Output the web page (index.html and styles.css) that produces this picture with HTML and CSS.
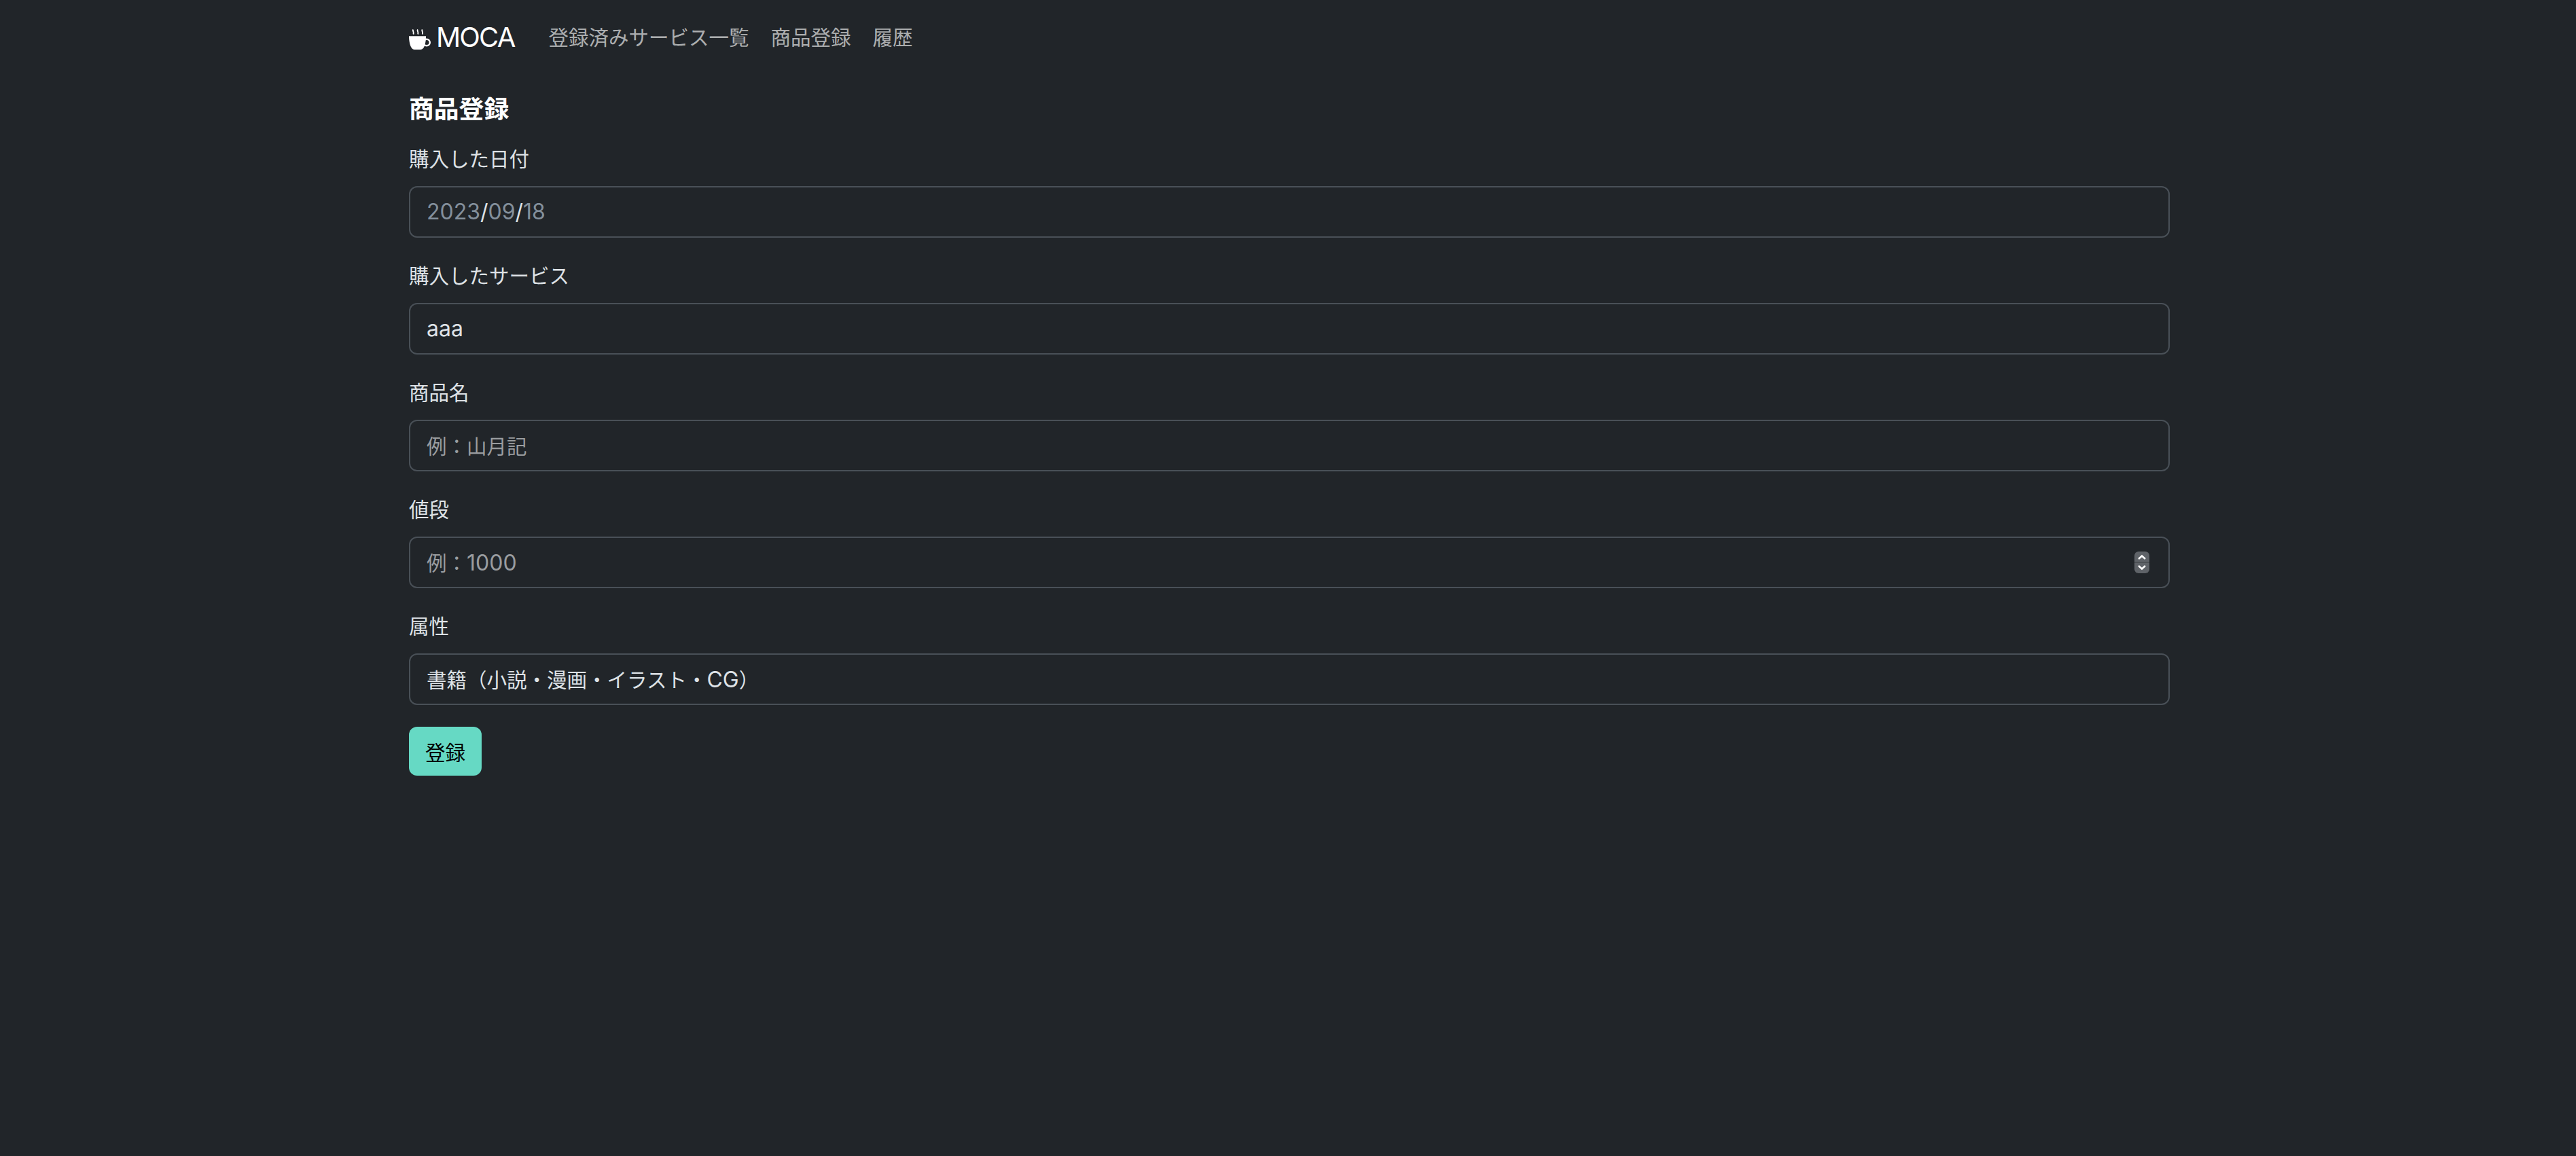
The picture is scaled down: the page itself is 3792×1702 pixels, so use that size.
FILE: index.html
```html
<!DOCTYPE html>
<html lang="ja">
<head>
<meta charset="utf-8">
<title>MOCA</title>
<link rel="stylesheet" href="styles.css">
</head>
<body>
<div class="container">
  <nav class="navbar">
    <a class="brand" href="#">
      <svg class="brand-icon" viewBox="0 0 32 30" aria-hidden="true">
        <path class="steam" d="M6.300 .5c-1.600 1.800 1.600 3.800 0 7M13 .5c-1.600 1.800 1.600 3.800 0 7M19.700 .5c-1.600 1.800 1.600 3.800 0 7"/>
        <circle class="handle" cx="26" cy="19.500" r="4.800"/>
        <path class="cup" d="M0 10.300H25C25 18 23.500 30 17 30H8C2 30 0 18 0 10.300z"/>
      </svg>
      <span>MOCA</span>
    </a>
    <ul class="nav-links">
      <li><a href="#">登録済みサービス一覧</a></li>
      <li><a href="#">商品登録</a></li>
      <li><a href="#">履歴</a></li>
    </ul>
  </nav>
  <main>
    <h1 class="title">商品登録</h1>
    <form class="form">
      <div class="field">
        <label class="label">購入した日付</label>
        <div class="control latin"><span class="part">2023</span>/<span class="part">09</span>/<span class="part">18</span></div>
      </div>
      <div class="field">
        <label class="label">購入したサービス</label>
        <div class="control latin">aaa</div>
      </div>
      <div class="field">
        <label class="label">商品名</label>
        <div class="control placeholder">例：山月記</div>
      </div>
      <div class="field">
        <label class="label">値段</label>
        <div class="control placeholder number">
          <span>例：<span class="latin">1000</span></span>
          <svg class="spinner" viewBox="0 0 22 32" aria-hidden="true">
            <rect class="spin-bg" width="22" height="32" rx="6"/>
            <path class="spin-line" d="M0 16h22"/>
            <path class="spin-arrow" d="M6 11l5-4.500 5 4.500M6 21l5 4.500 5-4.500"/>
          </svg>
        </div>
      </div>
      <div class="field">
        <label class="label">属性</label>
        <div class="control"><span>書籍（小説・漫画・イラスト・<span class="latin">CG</span>）</span></div>
      </div>
      <button class="submit" type="button">登録</button>
    </form>
  </main>
</div>
</body>
</html>
```
FILE: styles.css
```css
* { box-sizing: border-box; }
html, body { height: 100%; }
body {
  margin: 0;
  background: #212529;
  color: #dee2e6;
  font-family: Inter, "Noto Sans CJK JP", sans-serif;
  font-size: 29.500px;
}
.container { width: 2592px; margin-left: 602px; }
.navbar { display: flex; align-items: center; height: 108px; }
.brand { display: flex; align-items: center; gap: 8px; color: #fff; text-decoration: none; font-size: 40px; letter-spacing: -1.800px; }
.brand-icon { width: 32px; height: 30px; margin-top: 8px; flex: none; }
.steam { fill: none; stroke: #fff; stroke-width: 1.800; }
.handle { fill: none; stroke: #fff; stroke-width: 2.400; }
.cup { fill: #fff; }
.nav-links { display: flex; gap: 32px; list-style: none; margin: 0 0 3px 50px; padding: 0; }
.nav-links a { color: rgba(255,255,255,.65); text-decoration: none; }
.title { margin: 31px 0 27px; font-size: 36.800px; font-weight: 700; color: #fff; line-height: 44px; }
.field { margin-bottom: 32px; }
.label { display: block; line-height: 48px; margin-bottom: 16px; }
.control {
  display: flex; align-items: center; height: 76px; padding: 0 25px 2px 24px;
  border: 2px solid #495057; border-radius: 12px; color: #dee2e6;
}
.latin { font-size: 32px; }
.part { color: #84909c; }
.placeholder { color: #9a9da0; }
.number { justify-content: space-between; }
.spinner { width: 22px; height: 32px; margin: 2px 3px 0 0; flex: none; }
.spin-bg { fill: #5f6368; }
.spin-line { stroke: #3c4043; stroke-width: 1; }
.spin-arrow { fill: none; stroke: #fff; stroke-width: 2.500; }
.submit {
  display: block; width: 107px; height: 72px; padding: 0; border: 0; border-radius: 12px;
  background: #66d9c4; color: #000; font: inherit;
}
```
